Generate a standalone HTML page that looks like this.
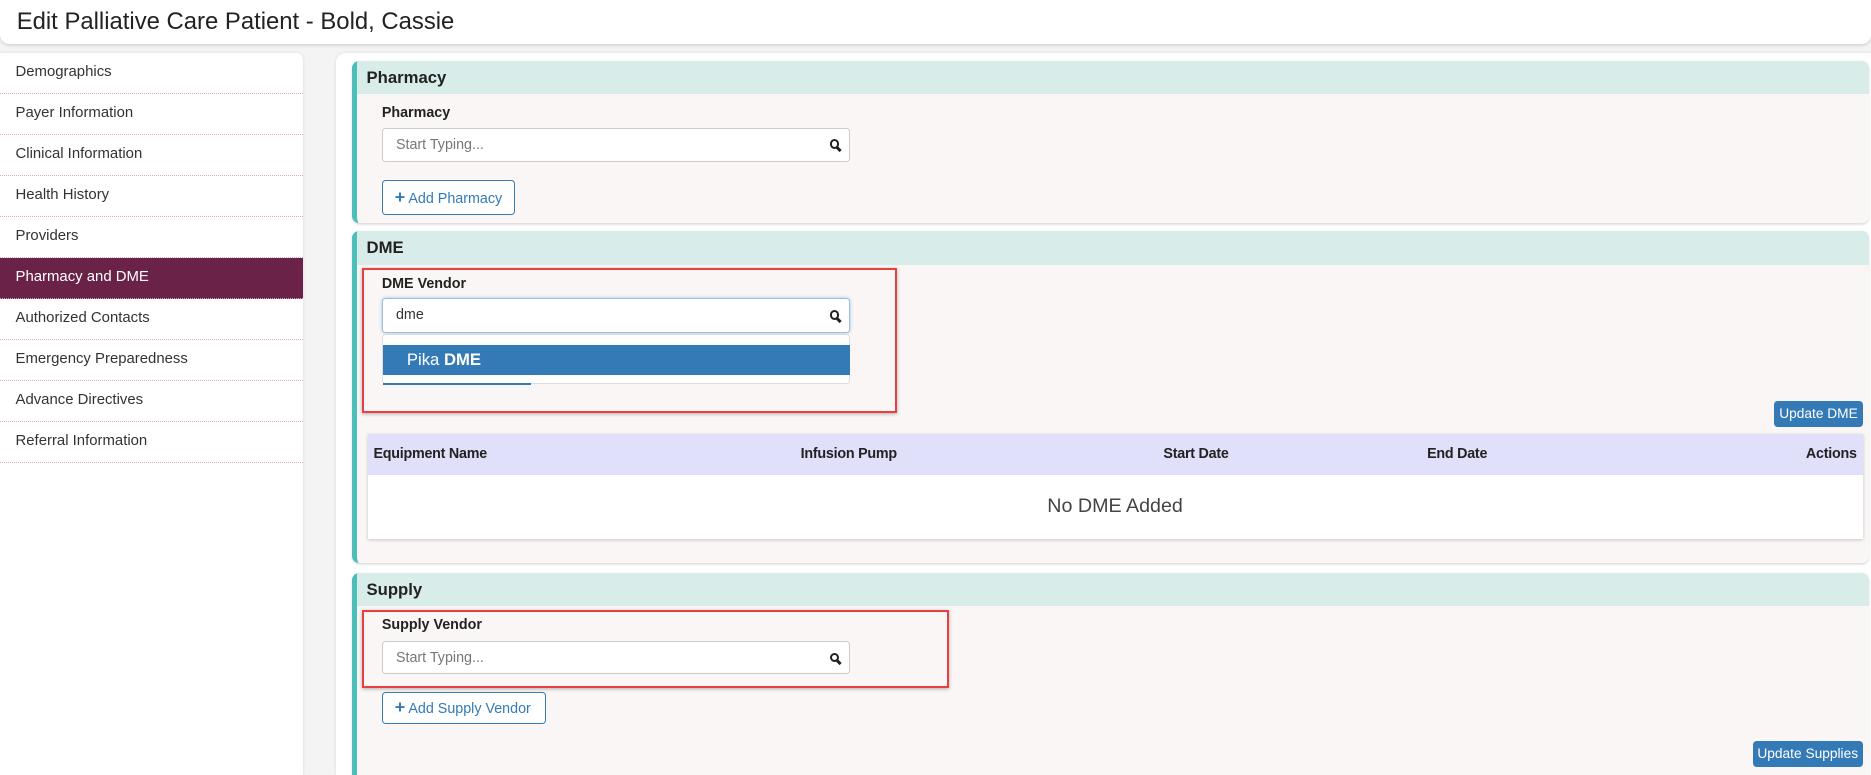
<!DOCTYPE html>
<html><head><meta charset="utf-8"><style>
html,body{margin:0;padding:0;width:1871px;height:775px;overflow:hidden;background:#f4f4f4;font-family:"Liberation Sans",sans-serif;color:#333}
#w{position:relative;width:1568px;height:650px;zoom:1.19324}
.a{position:absolute;box-sizing:border-box}
.title{left:0;top:0;width:1568px;height:37px;background:#fff;border-radius:0 0 8px 8px;box-shadow:0 1px 3px rgba(0,0,0,.15)}
.title span{position:absolute;left:14px;top:7px;font-size:20px;color:#222}
.side{left:0;top:44px;width:254px;height:606px;background:#fff;border-radius:0 6px 0 0;box-shadow:0 0 3px rgba(0,0,0,.1)}
.side div{height:34.4px;line-height:33px;padding-left:13px;font-size:12.5px;border-bottom:1px dotted #e0a9bd;box-sizing:border-box;color:#333}
.side div.on{background:#6b2248;color:#fff}
.main{left:282px;top:44px;width:1290px;height:606px;background:#fff;border-radius:8px 0 0 0;box-shadow:0 0 3px rgba(0,0,0,.1)}
.pan{left:295px;width:1271px;background:#faf6f5;border-left:5px solid #4bbfb8;border-radius:6px;box-shadow:0 1px 2px rgba(0,0,0,.15)}
.ph{position:absolute;left:0;top:0;right:0;height:28px;background:#d8ecea;font-weight:bold;font-size:14px;padding-left:8px;line-height:29px;color:#222;border-radius:0 6px 0 0}
.lbl{font-weight:bold;font-size:12px;color:#222}
.inp{width:392px;height:29px;background:#fff;border:1px solid #ccc;border-radius:3px;font-size:12px;color:#777;padding-left:11px;line-height:27px}
.mag{position:absolute;right:8px;top:9px;width:8px;height:8px;border:2px solid #222;border-radius:50%;box-sizing:border-box}
.mag:after{content:"";position:absolute;left:5px;top:4px;width:2.5px;height:5px;background:#222;transform:rotate(-45deg)}
.btn{border:1px solid #337ab7;border-radius:3px;color:#337ab7;font-size:12px;background:#fff;line-height:27px;padding-left:10px}
.bb{background:#337ab7;color:#fff;font-size:11.5px;border-radius:3px;text-align:center;line-height:22px}
.red{border:2px solid #e84040;box-shadow:0 1px 3px rgba(0,0,0,.3)}
</style></head><body><div id="w">
<div class="a title"><span>Edit Palliative Care Patient - Bold, Cassie</span></div>
<div class="a side">
<div>Demographics</div><div>Payer Information</div><div>Clinical Information</div><div>Health History</div><div>Providers</div><div class="on">Pharmacy and DME</div><div>Authorized Contacts</div><div>Emergency Preparedness</div><div>Advance Directives</div><div>Referral Information</div>
</div>
<div class="a main"></div>

<div class="a pan" style="top:51px;height:136px"><div class="ph">Pharmacy</div></div>
<div class="a lbl" style="left:320px;top:88px">Pharmacy</div>
<div class="a inp" style="left:320px;top:107px">Start Typing...<div class="mag"></div></div>
<div class="a btn" style="left:320px;top:151px;width:112px;height:29px"><b style="font-size:15px">+</b> Add Pharmacy</div>

<div class="a pan" style="top:194px;height:278px"><div class="ph">DME</div></div>
<div class="a red" style="left:303px;top:225px;width:449px;height:121px"></div>
<div class="a lbl" style="left:320px;top:231px">DME Vendor</div>
<div class="a inp" style="left:320px;top:250px;border-color:#9ebfe0;box-shadow:0 0 3px #9ebfe0;color:#333">dme<div class="mag"></div></div>
<div class="a" style="left:320px;top:280px;width:392px;height:42px;background:#fff;border:1px solid #ddd;border-radius:3px"></div>
<div class="a" style="left:321px;top:289px;width:391px;height:25px;background:#337ab7;color:#fff;font-size:14px;line-height:25px;padding-left:20px">Pika <b>DME</b></div>
<div class="a" style="left:321px;top:321px;width:124px;height:1.5px;background:#337ab7"></div>
<div class="a bb" style="left:1487px;top:336px;width:74px;height:22px">Update DME</div>
<div class="a" style="left:308px;top:364px;width:1253px;height:88px;background:#fff;box-shadow:0 1px 3px rgba(0,0,0,.2)">
<div style="position:absolute;left:0;top:0;right:0;height:34px;background:#e0e0fb;font-weight:bold;font-size:12px;color:#222;line-height:34px;letter-spacing:-0.2px">
<span style="position:absolute;left:5px">Equipment Name</span><span style="position:absolute;left:363px">Infusion Pump</span><span style="position:absolute;left:667px">Start Date</span><span style="position:absolute;left:888px">End Date</span><span style="position:absolute;right:5px">Actions</span></div>
<div style="position:absolute;left:0;right:0;top:51px;text-align:center;font-size:16.5px;color:#444">No DME Added</div>
</div>

<div class="a pan" style="top:480px;height:175px"><div class="ph">Supply</div></div>
<div class="a red" style="left:303px;top:511px;width:492px;height:66px"></div>
<div class="a lbl" style="left:320px;top:517px">Supply Vendor</div>
<div class="a inp" style="left:320px;top:537px;height:28px">Start Typing...<div class="mag"></div></div>
<div class="a btn" style="left:320px;top:580px;width:138px;height:27px;line-height:25px"><b style="font-size:15px">+</b> Add Supply Vendor</div>
<div class="a bb" style="left:1469px;top:621px;width:92px;height:22px">Update Supplies</div>
</div></body></html>
